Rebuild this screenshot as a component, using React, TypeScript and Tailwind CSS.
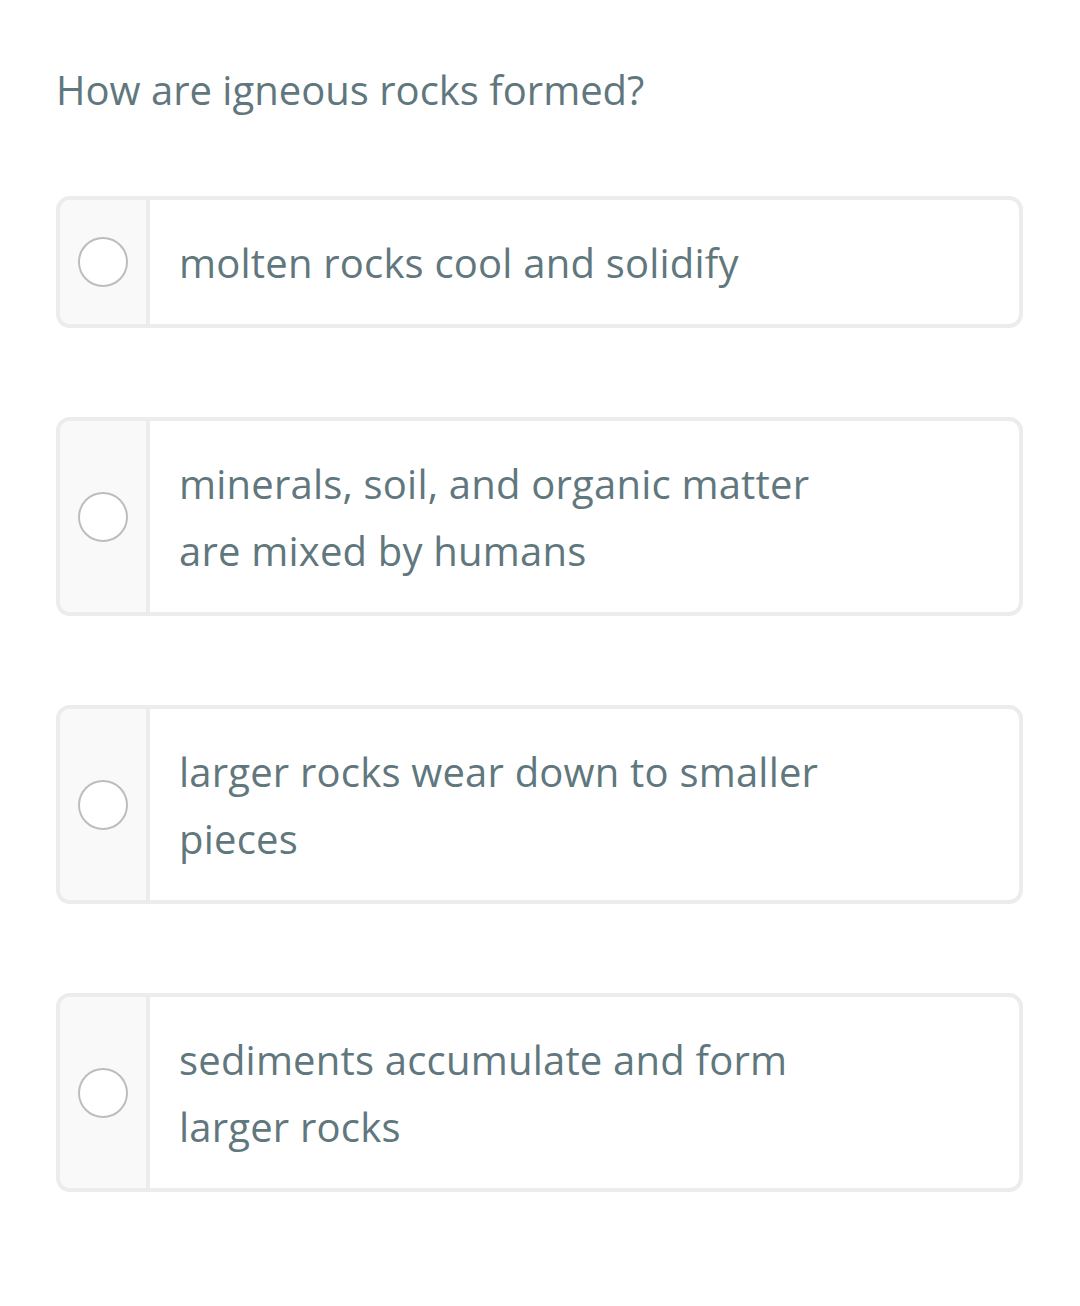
import React from 'react';

const OPTIONS: string[][] = [
  ['molten rocks cool and solidify'],
  ['minerals, soil, and organic matter', 'are mixed by humans'],
  ['larger rocks wear down to smaller', 'pieces'],
  ['sediments accumulate and form', 'larger rocks'],
];

function Option({ lines }: { lines: string[] }) {
  return (
    <div className="flex overflow-hidden rounded-[14px] border-4 border-[#ececec] bg-white">
      <div className="flex w-[90px] shrink-0 items-center justify-center border-r-4 border-[#ececec] bg-[#f9f9f9]">
        <div className="h-[50px] w-[50px] rounded-full border-2 border-[#bdbdbd] bg-white" />
      </div>
      <div className="pb-[28px] pl-[29px] pt-[29px] text-[40px] leading-[67px] tracking-[0.2px] text-[#5f777d]">
        {lines.map((l) => (
          <div key={l} className="whitespace-nowrap">{l}</div>
        ))}
      </div>
    </div>
  );
}

export default function App() {
  return (
    <div className="min-h-[1306px] bg-white pl-[56px] pr-[57px] pt-[62px]" style={{ fontFamily: '"Open Sans", "Noto Sans", sans-serif' }}>
      <h1 className="text-[40px] leading-[56px] text-[#5f777d]">How are igneous rocks formed?</h1>
      <div className="mt-[78px] flex flex-col gap-[89px]">
        {OPTIONS.map((o) => (
          <Option key={o[0]} lines={o} />
        ))}
      </div>
    </div>
  );
}
